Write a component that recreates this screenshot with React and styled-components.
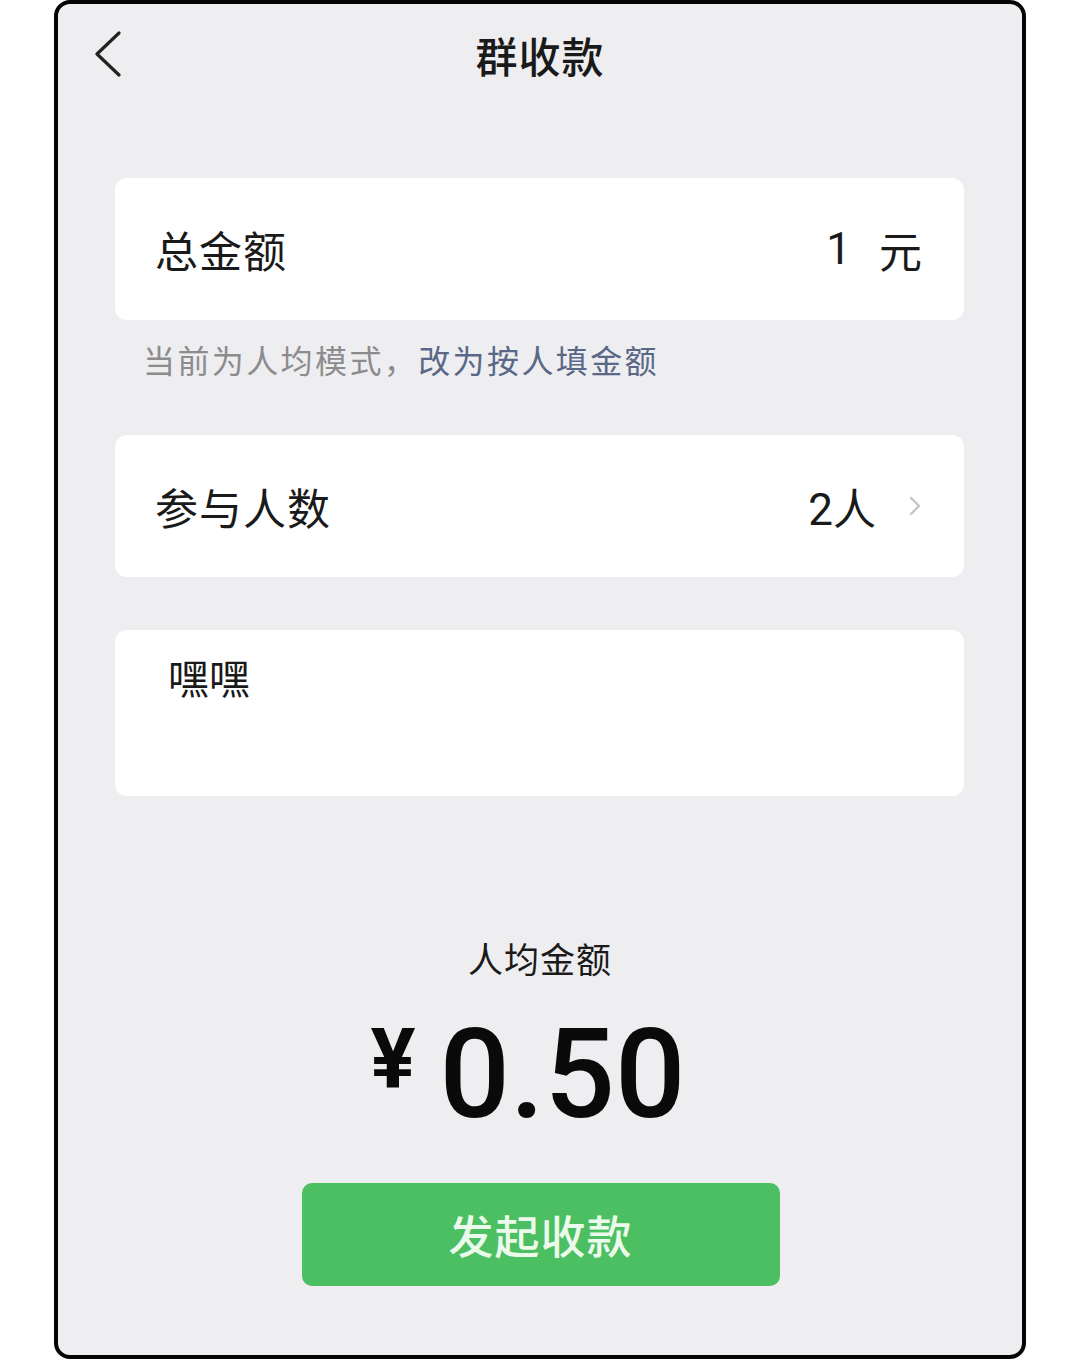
import React from "react";
import styled, { createGlobalStyle } from "styled-components";

const Global = createGlobalStyle`
  html, body { margin: 0; padding: 0; background: #ffffff; }
  body { font-family: "Noto Sans CJK SC", "Noto Sans", sans-serif; }
  * { box-sizing: border-box; }
`;

const Frame = styled.div`
  width: 972px;
  height: 1359px;
  margin-left: 54px;
  border: 4px solid #050505;
  border-radius: 16px;
  background: #eeeef0;
  display: flex;
  flex-direction: column;
  overflow: hidden;
`;

const Header = styled.header`
  height: 100px;
  display: grid;
  grid-template-columns: 120px 1fr 120px;
  align-items: center;
`;

const Back = styled.button`
  border: 0;
  background: none;
  padding: 0 0 0 36px;
  height: 50px;
  display: flex;
  align-items: center;
  justify-self: start;
`;

const Title = styled.h1`
  margin: 0;
  text-align: center;
  font-size: 42px;
  font-weight: 500;
  color: #1a1a1a;
  letter-spacing: 1px;
`;

const Body = styled.main`
  padding: 74px 58px 0 57px;
  display: flex;
  flex-direction: column;
`;

const Card = styled.div`
  background: #ffffff;
  border-radius: 12px;
  height: ${(p) => p.$h}px;
  margin-top: ${(p) => p.$mt || 0}px;
  display: flex;
  align-items: ${(p) => (p.$top ? "flex-start" : "center")};
  justify-content: space-between;
  padding: ${(p) => (p.$top ? "16px 40px 0 53px" : "0 42px 0 40px")};
`;

const Label = styled.span`
  font-size: 43px;
  color: #1a1a1a;
  letter-spacing: 1px;
`;

const Value = styled.span`
  font-size: 43px;
  color: #1a1a1a;
  display: flex;
  align-items: center;
  gap: ${(p) => p.$gap || 0}px;
`;

const Num = styled.span`
  font-family: "Roboto", "Noto Sans", sans-serif;
  font-size: 44px;
`;

const Hint = styled.p`
  margin: 17px 0 0 28px;
  font-size: 32px;
  line-height: 45px;
  color: #8c8c8e;
  letter-spacing: 2.4px;
`;

const Link = styled.span`
  color: #5a6888;
`;

const Note = styled.span`
  font-size: 41px;
  color: #1a1a1a;
`;

const Summary = styled.section`
  display: flex;
  flex-direction: column;
  align-items: center;
`;

const SumLabel = styled.div`
  margin-top: 137px;
  font-size: 35px;
  line-height: 50px;
  color: #1a1a1a;
  letter-spacing: 1px;
`;

const Amount = styled.div`
  margin-top: 30px;
  display: flex;
  align-items: flex-start;
  margin-right: 24px;
  color: #0a0a0a;
`;

const Yen = styled.span`
  font-family: "Roboto", "Liberation Sans", sans-serif;
  font-weight: 700;
  font-size: 84px;
  line-height: 1;
  margin-top: 5px;
  margin-right: 24px;
`;

const Digits = styled.span`
  font-family: "Roboto", "Liberation Sans", sans-serif;
  font-weight: 500;
  font-size: 124px;
  line-height: 1;
`;

const Primary = styled.button`
  margin-top: 46px;
  width: 478px;
  height: 103px;
  border: 0;
  border-radius: 10px;
  background: #4cbf62;
  color: #ebfaea;
  font-family: "Noto Sans CJK SC", sans-serif;
  font-size: 45px;
  font-weight: 500;
  letter-spacing: 1px;
  margin-left: 1px;
`;

export default function App() {
  return (
    <>
      <Global />
      <Frame>
        <Header>
          <Back aria-label="返回">
            <svg width="28" height="46" viewBox="0 0 28 46">
              <polyline
                points="25,2 3,23 25,44"
                fill="none"
                stroke="#222"
                strokeWidth="3.2"
                strokeLinecap="round"
                strokeLinejoin="round"
              />
            </svg>
          </Back>
          <Title>群收款</Title>
          <span />
        </Header>
        <Body>
          <Card $h={142}>
            <Label>总金额</Label>
            <Value $gap={28}>
              <Num>1</Num>
              <span>元</span>
            </Value>
          </Card>
          <Hint>
            当前为人均模式，<Link>改为按人填金额</Link>
          </Hint>
          <Card $h={142} $mt={53}>
            <Label>参与人数</Label>
            <Value $gap={32}>
              <span>
                <Num>2</Num>人
              </span>
              <svg width="14" height="22" viewBox="0 0 14 22">
                <polyline
                  points="3,3 11,11 3,19"
                  fill="none"
                  stroke="#c4c4c6"
                  strokeWidth="2.4"
                  strokeLinecap="round"
                  strokeLinejoin="round"
                />
              </svg>
            </Value>
          </Card>
          <Card $h={166} $mt={53} $top>
            <Note>嘿嘿</Note>
          </Card>
        </Body>
        <Summary>
          <SumLabel>人均金额</SumLabel>
          <Amount>
            <Yen>¥</Yen>
            <Digits>0.50</Digits>
          </Amount>
          <Primary>发起收款</Primary>
        </Summary>
      </Frame>
    </>
  );
}
